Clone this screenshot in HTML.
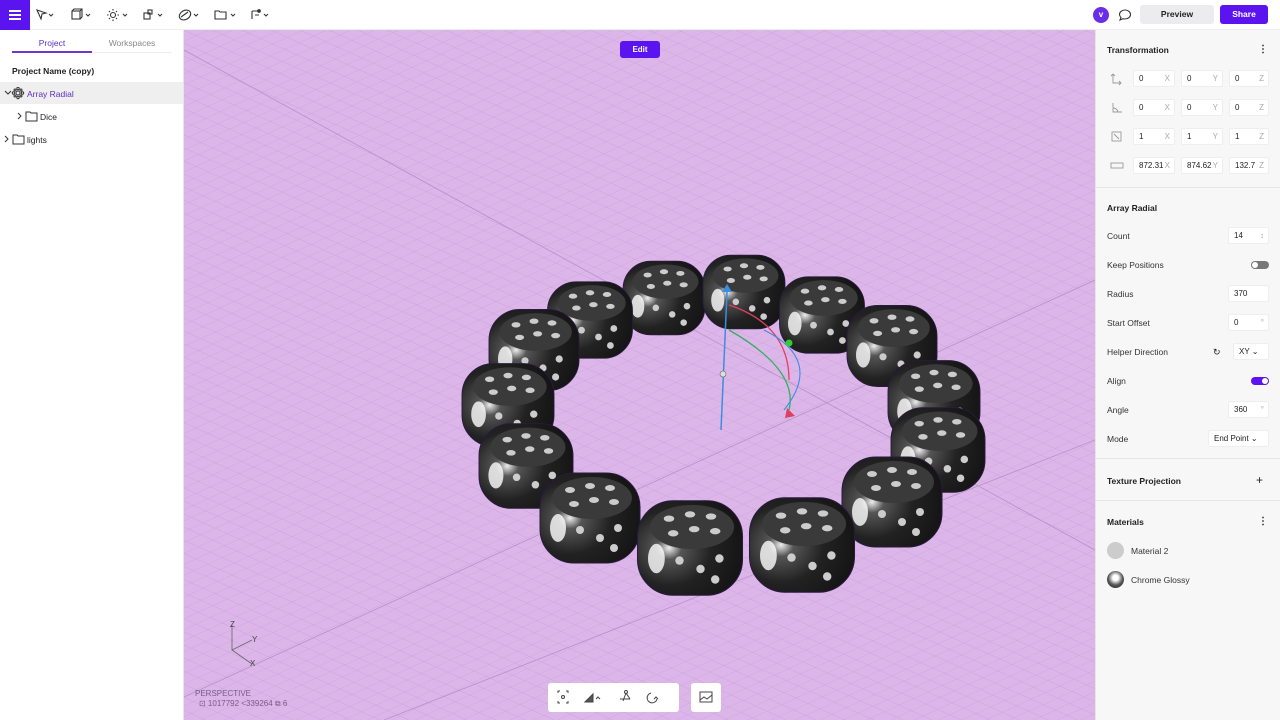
<!DOCTYPE html>
<html><head><meta charset="utf-8"><style>
*{box-sizing:border-box;margin:0;padding:0}
body{width:1280px;height:720px;overflow:hidden;font-family:"Liberation Sans",sans-serif;font-size:9px;color:#222;background:#fff;position:relative}
.top{position:absolute;left:0;top:0;width:1280px;height:30px;background:#fff;border-bottom:1px solid #eee}
.menu{position:absolute;left:0;top:0;width:30px;height:30px;background:#5b14f0}
.left{position:absolute;left:0;top:30px;width:184px;height:690px;background:#fff;border-right:1px solid #e6e6e6}
.vp{position:absolute;left:184px;top:30px;width:911px;height:690px;background:#dcb6e8;overflow:hidden}
.right{position:absolute;left:1095px;top:30px;width:185px;height:690px;background:#f7f7f8;border-left:1px solid #e6e6e6}
.abs{position:absolute}
.inp{position:absolute;background:#fff;border:1px solid #eee;border-radius:2px;height:17px;font-size:8px;padding:3px 0 0 5px}
.inp i{position:absolute;right:4px;top:3px;font-style:normal;color:#aaa}
.lbl{position:absolute;left:11px;font-size:8.5px;color:#333}
.h{position:absolute;left:11px;font-weight:bold;font-size:8.5px}
.sep{position:absolute;left:0;width:185px;height:1px;background:#e6e6e6}
</style></head><body>
<div class="top">
<div class="menu"><div class="abs" style="left:9px;top:10px;width:12px;height:1.5px;background:#fff;box-shadow:0 4px #fff,0 8px #fff"></div></div>
<svg class="abs" style="left:34px;top:6px" width="240" height="18" fill="none" stroke="#333" stroke-width="1.1">
<path d="M3 4l9 3-4 1-1 5z"/><path d="M15 8l2 2 2-2"/>
<rect x="38" y="5" width="8" height="8"/><path d="M38 5l2-2h8v8l-2 2M46 5l2-2"/><path d="M52 8l2 2 2-2"/>
<circle cx="79" cy="9" r="2.5"/><path d="M79 3v1.5M79 13.5v1.5M73 9h1.5M83.5 9h1.5M75 5l1 1M82 12l1 1M75 13l1-1M82 6l1-1"/><path d="M89 8l2 2 2-2"/>
<rect x="110" y="7" width="6" height="6"/><rect x="114" y="4" width="4" height="4"/><path d="M124 8l2 2 2-2"/>
<ellipse cx="151" cy="9" rx="6" ry="4.5" transform="rotate(-30 151 9)"/><path d="M147 11l7-5"/><path d="M160 8l2 2 2-2"/>
<path d="M181 5h4l1 1h6v7h-11z"/><path d="M197 8l2 2 2-2"/>
<path d="M218 5v8M218 5h6M221 9h4"/><circle cx="225" cy="5" r="1.3" fill="#333"/><path d="M230 8l2 2 2-2"/>
</svg>
<div class="abs" style="left:1093px;top:7px;width:16px;height:16px;border-radius:8px;background:#6a2ee8;color:#fff;font-size:8px;text-align:center;line-height:16px;font-weight:bold">v</div>
<svg class="abs" style="left:1118px;top:8px" width="14" height="14" fill="none" stroke="#333" stroke-width="1.1"><path d="M7 2c3 0 5.5 2 5.5 4.5S10 11 7 11c-1 0-1.5 0-2-.3L2 12l1-2.5C2 8.5 1.5 7.5 1.5 6.5 1.5 4 4 2 7 2z"/></svg>
<div class="abs" style="left:1140px;top:5px;width:74px;height:19px;background:#ececee;border-radius:3px;text-align:center;line-height:19px;font-weight:bold;font-size:8.5px">Preview</div>
<div class="abs" style="left:1220px;top:5px;width:48px;height:19px;background:#5b14f0;border-radius:3px;text-align:center;line-height:19px;font-weight:bold;font-size:8.5px;color:#fff">Share</div>
</div>

<div class="left">
<div class="abs" style="left:12px;top:8px;width:80px;text-align:center;color:#5b2fc0;font-size:8.5px">Project</div>
<div class="abs" style="left:92px;top:8px;width:80px;text-align:center;color:#888;font-size:8.5px">Workspaces</div>
<div class="abs" style="left:12px;top:21px;width:80px;height:1.5px;background:#6a3ad0"></div>
<div class="abs" style="left:92px;top:21.5px;width:80px;height:1px;background:#eee"></div>
<div class="abs" style="left:12px;top:36px;font-weight:bold;font-size:8.5px">Project Name (copy)</div>
<div class="abs" style="left:0;top:52px;width:183px;height:22px;background:#efefef"></div>
<svg class="abs" style="left:3px;top:57px" width="60" height="100" fill="none" stroke="#333" stroke-width="1">
<path d="M2 4l3 3 3-3"/><circle cx="15" cy="6" r="2"/><circle cx="15" cy="1.5" r="1.2"/><circle cx="15" cy="10.5" r="1.2"/><circle cx="10.5" cy="6" r="1.2"/><circle cx="19.5" cy="6" r="1.2"/><circle cx="12" cy="3" r="1"/><circle cx="18" cy="9" r="1"/><circle cx="12" cy="9" r="1"/><circle cx="18" cy="3" r="1"/>
<path d="M15 26l3 3-3 3"/><path d="M23 25h4l1 1h6v8h-11z"/>
<path d="M2 49l3 3-3 3"/><path d="M10 48h4l1 1h6v8h-11z"/>
</svg>
<div class="abs" style="left:27px;top:59px;color:#5b2fc0;font-size:8.5px">Array Radial</div>
<div class="abs" style="left:40px;top:82px;font-size:8.5px">Dice</div>
<div class="abs" style="left:27px;top:105px;font-size:8.5px">lights</div>
</div>

<div class="vp">
<svg width="911" height="690" style="position:absolute;left:0;top:0">
<defs>
<pattern id="g" width="12" height="12" patternUnits="userSpaceOnUse" patternTransform="matrix(1,0.45,-1.2,0.55,0,0)"><path d="M12 0H0V12" fill="none" stroke="#c99ed9" stroke-width="0.7"/></pattern>
<radialGradient id="dg" cx="0.3" cy="0.5" r="0.8"><stop offset="0" stop-color="#eee"/><stop offset="0.15" stop-color="#555"/><stop offset="0.5" stop-color="#222"/><stop offset="1" stop-color="#111"/></radialGradient>
<g id="die">
<rect x="-50" y="-45" width="100" height="90" rx="34" fill="url(#dg)" stroke="#2a1a40" stroke-width="1"/>
<ellipse cx="2" cy="-20" rx="40" ry="21" fill="#3a3a3a"/>
<g fill="#ccc"><ellipse cx="-20" cy="-28" rx="5" ry="3"/><ellipse cx="0" cy="-32" rx="5" ry="3"/><ellipse cx="20" cy="-30" rx="5" ry="3"/><ellipse cx="-16" cy="-14" rx="5" ry="3"/><ellipse cx="4" cy="-18" rx="5" ry="3"/><ellipse cx="24" cy="-16" rx="5" ry="3"/>
<circle cx="-10" cy="12" r="4"/><circle cx="10" cy="20" r="4"/><circle cx="28" cy="10" r="4"/><circle cx="24" cy="30" r="4"/></g>
<ellipse cx="-32" cy="10" rx="8" ry="14" fill="#fff" opacity="0.8"/>
</g>
</defs>
<rect width="911" height="690" fill="url(#g)"/>
<path d="M0 20L911 520M-50 690L911 250M200 690L911 410" stroke="#b890c8" stroke-width="0.8"/>
<use href="#die" transform="translate(480,268) scale(0.82)"/>
<use href="#die" transform="translate(560,262) scale(0.82)"/>
<use href="#die" transform="translate(406,290) scale(0.85)"/>
<use href="#die" transform="translate(638,285) scale(0.85)"/>
<use href="#die" transform="translate(350,320) scale(0.9)"/>
<use href="#die" transform="translate(708,316) scale(0.9)"/>
<use href="#die" transform="translate(324,375) scale(0.92)"/>
<use href="#die" transform="translate(750,372) scale(0.92)"/>
<use href="#die" transform="translate(754,420) scale(0.94)"/>
<use href="#die" transform="translate(342,436) scale(0.94)"/>
<use href="#die" transform="translate(708,472) scale(1)"/>
<use href="#die" transform="translate(406,488) scale(1)"/>
<use href="#die" transform="translate(618,515) scale(1.05)"/>
<use href="#die" transform="translate(506,518) scale(1.05)"/>
<path d="M537 400L543 262" stroke="#3a8ee0" stroke-width="1.5"/><path d="M538 262l5-8 5 8z" fill="#3a8ee0"/>
<path d="M545 275q60 20 60 75" stroke="#e04060" fill="none" stroke-width="1.3"/>
<path d="M545 300q70 40 60 80" stroke="#30b060" fill="none" stroke-width="1.3"/>
<path d="M580 300q60 30 20 80" stroke="#3a8ee0" fill="none" stroke-width="1.1"/>
<path d="M603 378l8 8-10 2z" fill="#e04060"/>
<circle cx="539" cy="344" r="3" fill="#ddd" stroke="#666" stroke-width="0.6"/>
<circle cx="605" cy="313" r="3.5" fill="#3c3"/>
<path d="M48 595v25l20-10M48 620l20 14" stroke="#666" fill="none" stroke-width="0.8"/>
<text x="46" y="597" font-size="8" fill="#444">Z</text><text x="68" y="612" font-size="8" fill="#444">Y</text><text x="66" y="636" font-size="8" fill="#444">X</text>
<text x="11" y="666" font-size="8" fill="#7a5a88">PERSPECTIVE</text>
<text x="15" y="676" font-size="8" fill="#7a5a88">⊡ 1017792 &lt;339264 ⧉ 6</text>
</svg>
<div class="abs" style="left:436px;top:11px;width:40px;height:17px;background:#5b14f0;border-radius:3px;color:#fff;font-weight:bold;font-size:8px;text-align:center;line-height:17px">Edit</div>
<div class="abs" style="left:364px;top:653px;width:131px;height:29px;background:#fff;border-radius:3px"></div>
<div class="abs" style="left:507px;top:653px;width:30px;height:29px;background:#fff;border-radius:3px"></div>
<svg class="abs" style="left:364px;top:653px" width="180" height="29" fill="none" stroke="#444" stroke-width="1">
<path d="M10 10v-2h2M18 8h2v2M20 18v2h-2M12 20h-2v-2"/><circle cx="15" cy="14" r="1.5"/>
<path d="M37 19l8-8v8z" fill="#555"/><path d="M48 16l2-2 2 2"/>
<circle cx="78" cy="9" r="1.5"/><path d="M78 10l-3 8M78 10l4 6M72 16h10"/>
<path d="M103 10a5 5 0 1 0 6 6"/><path d="M106 16l2-2 2 2"/>
<rect x="152" y="9" width="12" height="10"/><path d="M152 17l4-3 3 2 5-4"/>
</svg>
</div>

<div class="right">
<div class="h" style="top:15px">Transformation</div>
<div class="abs" style="left:162px;top:14px;font-weight:bold;font-size:10px">⋮</div>
<svg class="abs" style="left:14px;top:42px" width="14" height="100" fill="none" stroke="#999" stroke-width="0.9"><path d="M3 2v9h8M9 9l2 2-2 2M1 4l2-2 2 2"/><path d="M3 31v9h9M3 36q4 0 5 4"/><rect x="2" y="60" width="9" height="9"/><path d="M4 62l5 5"/><rect x="1" y="91" width="12" height="5"/></svg>
<div class="inp" style="left:37px;top:40px;width:42px">0<i>X</i></div><div class="inp" style="left:85px;top:40px;width:42px">0<i>Y</i></div><div class="inp" style="left:133px;top:40px;width:40px">0<i>Z</i></div>
<div class="inp" style="left:37px;top:69px;width:42px">0<i>X</i></div><div class="inp" style="left:85px;top:69px;width:42px">0<i>Y</i></div><div class="inp" style="left:133px;top:69px;width:40px">0<i>Z</i></div>
<div class="inp" style="left:37px;top:98px;width:42px">1<i>X</i></div><div class="inp" style="left:85px;top:98px;width:42px">1<i>Y</i></div><div class="inp" style="left:133px;top:98px;width:40px">1<i>Z</i></div>
<div class="inp" style="left:37px;top:127px;width:42px">872.31<i>X</i></div><div class="inp" style="left:85px;top:127px;width:42px">874.62<i>Y</i></div><div class="inp" style="left:133px;top:127px;width:40px">132.7<i>Z</i></div>
<div class="sep" style="top:157px"></div>
<div class="h" style="top:173px">Array Radial</div>
<div class="lbl" style="top:201px">Count</div><div class="inp" style="left:132px;top:197px;width:41px">14<i>↕</i></div>
<div class="lbl" style="top:230px">Keep Positions</div><div class="abs" style="left:155px;top:231px;width:18px;height:8px;border-radius:4px;background:#777"><div class="abs" style="left:1px;top:1px;width:6px;height:6px;border-radius:3px;background:#fff"></div></div>
<div class="lbl" style="top:259px">Radius</div><div class="inp" style="left:132px;top:255px;width:41px">370</div>
<div class="lbl" style="top:288px">Start Offset</div><div class="inp" style="left:132px;top:284px;width:41px">0<i>°</i></div>
<div class="lbl" style="top:317px">Helper Direction</div><div class="abs" style="left:117px;top:317px;font-size:9px">↻</div><div class="inp" style="left:137px;top:313px;width:36px">XY ⌄</div>
<div class="lbl" style="top:346px">Align</div><div class="abs" style="left:155px;top:347px;width:18px;height:8px;border-radius:4px;background:#5b14f0"><div class="abs" style="left:11px;top:1px;width:6px;height:6px;border-radius:3px;background:#fff"></div></div>
<div class="lbl" style="top:375px">Angle</div><div class="inp" style="left:132px;top:371px;width:41px">360<i>°</i></div>
<div class="lbl" style="top:404px">Mode</div><div class="inp" style="left:112px;top:400px;width:61px">End Point ⌄</div>
<div class="sep" style="top:428px"></div>
<div class="h" style="top:446px">Texture Projection</div><div class="abs" style="left:160px;top:443px;font-size:12px">+</div>
<div class="sep" style="top:470px"></div>
<div class="h" style="top:487px">Materials</div><div class="abs" style="left:162px;top:486px;font-weight:bold;font-size:10px">⋮</div>
<div class="abs" style="left:11px;top:512px;width:17px;height:17px;border-radius:9px;background:#ccc"></div>
<div class="lbl" style="left:35px;top:516px">Material 2</div>
<div class="abs" style="left:11px;top:541px;width:17px;height:17px;border-radius:9px;background:radial-gradient(circle at 50% 40%,#fff 20%,#555 55%,#222)"></div>
<div class="lbl" style="left:35px;top:545px">Chrome Glossy</div>
</div>
</body></html>
